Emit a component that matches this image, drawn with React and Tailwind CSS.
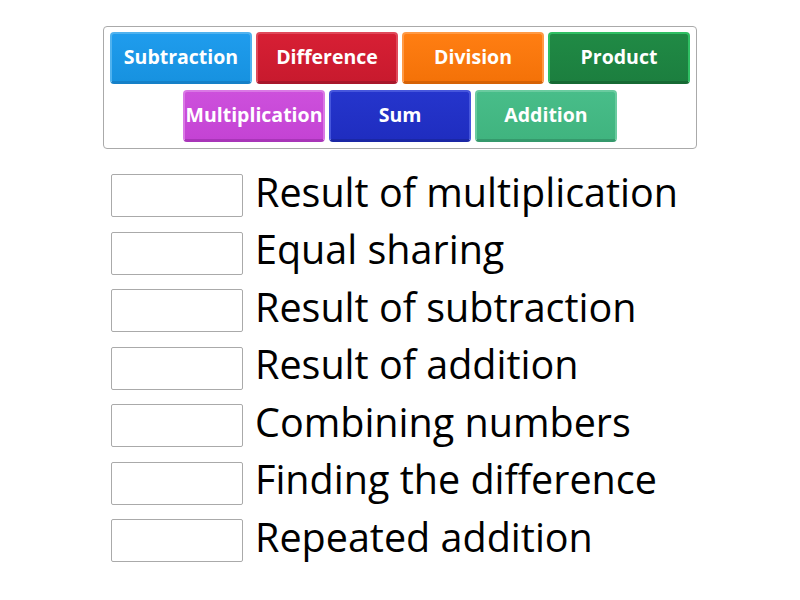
const tiles = [
  { label: 'Subtraction', cls: 'bg-gradient-to-b from-[#1f9ced] to-[#1792e0] border-[#4fb2ef] border-b-[#1580c8]' },
  { label: 'Difference', cls: 'bg-gradient-to-b from-[#d71f34] to-[#c81a2e] border-[#e0495a] border-b-[#a8162a]' },
  { label: 'Division', cls: 'bg-gradient-to-b from-[#ff7e12] to-[#f47208] border-[#ff9a45] border-b-[#d66205]' },
  { label: 'Product', cls: 'bg-gradient-to-b from-[#208a45] to-[#1c7f3f] border-[#2fbf63] border-b-[#166a34]' },
  { label: 'Multiplication', cls: 'bg-gradient-to-b from-[#cd50dc] to-[#c443d4] border-[#da78e5] border-b-[#a835b8]' },
  { label: 'Sum', cls: 'bg-gradient-to-b from-[#2535cc] to-[#1f2dc0] border-[#4656dc] border-b-[#1a27a5]' },
  { label: 'Addition', cls: 'bg-gradient-to-b from-[#48bd89] to-[#40b47f] border-[#6acb9f] border-b-[#35996c]' },
]

const prompts = [
  'Result of multiplication',
  'Equal sharing',
  'Result of subtraction',
  'Result of addition',
  'Combining numbers',
  'Finding the difference',
  'Repeated addition',
]

function Tile({ label, cls }) {
  return (
    <div className={`w-[142px] h-[52px] rounded-[4px] border-2 border-b-[3px] flex items-center justify-center text-white font-bold text-[19.5px] ${cls}`}>
      <span className="-mt-[2px] whitespace-nowrap">{label}</span>
    </div>
  )
}

export default function App() {
  return (
    <div className="w-[800px] h-[600px] bg-white" style={{ fontFamily: '"Open Sans", sans-serif' }}>
      <div className="pt-[26px] flex justify-center">
        <div className="w-[594px] h-[123px] border border-[#aaaaaa] rounded-[4px] pt-[5px] flex flex-col items-center gap-[6px]">
          <div className="flex gap-[4px]">
            {tiles.slice(0, 4).map((t) => <Tile key={t.label} {...t} />)}
          </div>
          <div className="flex gap-[4px]">
            {tiles.slice(4).map((t) => <Tile key={t.label} {...t} />)}
          </div>
        </div>
      </div>
      <div className="pt-[25px] pl-[111px] flex flex-col gap-[14.5px]">
        {prompts.map((p) => (
          <div key={p} className="flex items-center h-[43px]">
            <div className="w-[132px] h-[43px] border border-[#aaaaaa] rounded-[2px] bg-white shrink-0" />
            <div className="ml-[12px] text-[39.5px] leading-none text-black whitespace-nowrap -mt-[6px]">{p}</div>
          </div>
        ))}
      </div>
    </div>
  )
}
